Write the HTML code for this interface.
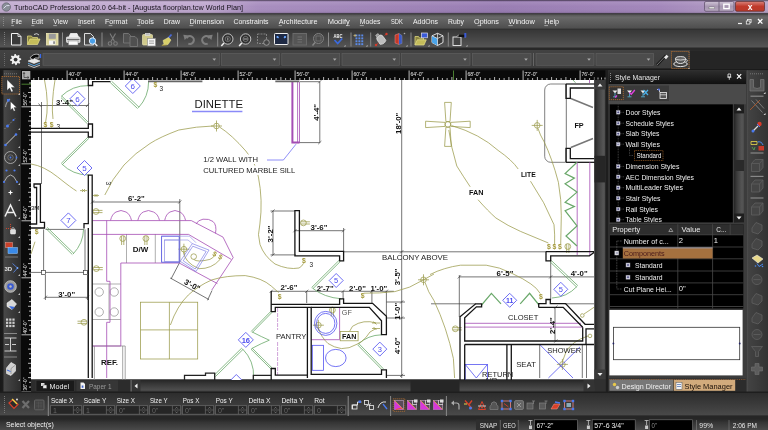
<!DOCTYPE html>
<html>
<head>
<meta charset="utf-8">
<title>TurboCAD Professional 20.0 64-bit - [Augusta floorplan.tcw World Plan]</title>
<style>
html,body{margin:0;padding:0;background:#2b2b2b;}
body{width:768px;height:430px;overflow:hidden;position:relative;font-family:"Liberation Sans","DejaVu Sans",sans-serif;}
.abs{position:absolute;display:block;}
svg text{white-space:pre;}
svg{filter:blur(0.35px);}
</style>
</head>
<body>
<svg class="abs" style="left:0;top:0" width="768" height="430" viewBox="0 0 768 430" font-family="Liberation Sans, sans-serif">
<defs>
<linearGradient id="gTitle" x1="0" x2="1" y1="0" y2="0"><stop offset="0" stop-color="#c2acd0"/><stop offset="0.27" stop-color="#bfa8cf"/><stop offset="0.335" stop-color="#a88ebf"/><stop offset="0.65" stop-color="#997db3"/><stop offset="0.86" stop-color="#a387bb"/><stop offset="1" stop-color="#b7a4c6"/></linearGradient>
<linearGradient id="gTitleV" x1="0" x2="0" y1="0" y2="1"><stop offset="0" stop-color="#000" stop-opacity="0.6"/><stop offset="0.09" stop-color="#000" stop-opacity="0.1"/><stop offset="0.15" stop-color="#fff" stop-opacity="0.1"/><stop offset="0.5" stop-color="#fff" stop-opacity="0"/><stop offset="0.9" stop-color="#000" stop-opacity="0.05"/><stop offset="1" stop-color="#000" stop-opacity="0.3"/></linearGradient>
<linearGradient id="gMenu" x1="0" x2="0" y1="0" y2="1"><stop offset="0" stop-color="#333"/><stop offset="0.12" stop-color="#5a5a5a"/><stop offset="0.25" stop-color="#696969"/><stop offset="1" stop-color="#4c4c4c"/></linearGradient>
<linearGradient id="gTb1" x1="0" x2="0" y1="0" y2="1"><stop offset="0" stop-color="#363636"/><stop offset="0.5" stop-color="#464646"/><stop offset="1" stop-color="#565656"/></linearGradient>
<linearGradient id="gTb2" x1="0" x2="0" y1="0" y2="1"><stop offset="0" stop-color="#424242"/><stop offset="1" stop-color="#3c3c3c"/></linearGradient>
<linearGradient id="gSide" x1="0" x2="1" y1="0" y2="0"><stop offset="0" stop-color="#181818"/><stop offset="0.13" stop-color="#1c1c1c"/><stop offset="0.2" stop-color="#474747"/><stop offset="1" stop-color="#2c2c2c"/></linearGradient><linearGradient id="gSideR" x1="0" x2="1" y1="0" y2="0"><stop offset="0" stop-color="#444"/><stop offset="1" stop-color="#333"/></linearGradient>
<linearGradient id="gScrollV" x1="0" x2="1" y1="0" y2="0"><stop offset="0" stop-color="#242424"/><stop offset="0.3" stop-color="#3c3c3c"/><stop offset="0.8" stop-color="#565656"/><stop offset="1" stop-color="#4a4a4a"/></linearGradient>
<linearGradient id="gScrollH" x1="0" x2="0" y1="0" y2="1"><stop offset="0" stop-color="#262626"/><stop offset="0.3" stop-color="#363636"/><stop offset="0.8" stop-color="#4c4c4c"/><stop offset="1" stop-color="#3e3e3e"/></linearGradient>
<linearGradient id="gSmTitle" x1="0" x2="0" y1="0" y2="1"><stop offset="0" stop-color="#2e2e2e"/><stop offset="1" stop-color="#101010"/></linearGradient>
<linearGradient id="gClose" x1="0" x2="0" y1="0" y2="1"><stop offset="0" stop-color="#d9827a"/><stop offset="0.5" stop-color="#c0392b"/><stop offset="1" stop-color="#b83a2a"/></linearGradient>
<linearGradient id="gBtn" x1="0" x2="0" y1="0" y2="1"><stop offset="0" stop-color="#cfc4d6"/><stop offset="0.5" stop-color="#a898b2"/><stop offset="1" stop-color="#b4a6bc"/></linearGradient>
</defs>
<rect x="0" y="0" width="768" height="430" fill="#2b2b2b"/>
<rect x="0" y="0" width="768" height="13.500" fill="url(#gTitle)"/><rect x="0" y="0" width="768" height="13.500" fill="url(#gTitleV)"/>
<circle cx="6.300" cy="7" r="4.200" fill="#8a8f98" stroke="#5a5a66" stroke-width="0.6"/><path d="M3.500 8.500q2.500-4 6-3" fill="none" stroke="#dde" stroke-width="1"/>
<text x="14" y="10" font-size="7.600px" fill="#15121a" textLength="229" lengthAdjust="spacingAndGlyphs">TurboCAD Professional 20.0 64-bit - [Augusta floorplan.tcw World Plan]</text>
<rect x="704.500" y="1.500" width="29.500" height="9.800" rx="1.500" fill="url(#gBtn)" stroke="#5a4a66" stroke-width="0.7"/><path d="M719 1.500V11.300" stroke="#5a4a66" stroke-width="0.7"/>
<rect x="735.500" y="1.500" width="29" height="9.800" rx="1.500" fill="url(#gClose)" stroke="#5a2a2a" stroke-width="0.7"/>
<rect x="709" y="7" width="5.500" height="1.800" fill="#fff" stroke="#555" stroke-width="0.4"/><rect x="723.800" y="4.200" width="5.400" height="4.400" fill="none" stroke="#fff" stroke-width="1.300"/>
<text x="750" y="9.800" font-size="8.500px" font-weight="bold" fill="#fff" text-anchor="middle">x</text>
<rect x="0" y="13.400" width="768" height="15.800" fill="url(#gMenu)"/><rect x="0" y="28.700" width="768" height="0.900" fill="#2a2a2a"/>
<path d="M3.500 17v10" stroke="#888" stroke-width="1" stroke-dasharray="1 1"/>
<text x="11.3" y="24.300" font-size="7.600px" fill="#f2f2f2" textLength="10.8" lengthAdjust="spacingAndGlyphs">File</text>
<path d="M11.3 25.600h2.7" stroke="#ddd" stroke-width="0.6"/>
<text x="31.4" y="24.300" font-size="7.600px" fill="#f2f2f2" textLength="11.8" lengthAdjust="spacingAndGlyphs">Edit</text>
<path d="M31.4 25.600h3.0" stroke="#ddd" stroke-width="0.6"/>
<text x="53.3" y="24.300" font-size="7.600px" fill="#f2f2f2" textLength="14.5" lengthAdjust="spacingAndGlyphs">View</text>
<path d="M53.3 25.600h3.6" stroke="#ddd" stroke-width="0.6"/>
<text x="77.9" y="24.300" font-size="7.600px" fill="#f2f2f2" textLength="17.1" lengthAdjust="spacingAndGlyphs">Insert</text>
<path d="M77.9 25.600h2.8" stroke="#ddd" stroke-width="0.6"/>
<text x="105" y="24.300" font-size="7.600px" fill="#f2f2f2" textLength="22.4" lengthAdjust="spacingAndGlyphs">Format</text>
<path d="M108.7 25.600h3.7" stroke="#ddd" stroke-width="0.6"/>
<text x="137" y="24.300" font-size="7.600px" fill="#f2f2f2" textLength="16.8" lengthAdjust="spacingAndGlyphs">Tools</text>
<path d="M137.0 25.600h3.4" stroke="#ddd" stroke-width="0.6"/>
<text x="163.8" y="24.300" font-size="7.600px" fill="#f2f2f2" textLength="16.2" lengthAdjust="spacingAndGlyphs">Draw</text>
<text x="189.5" y="24.300" font-size="7.600px" fill="#f2f2f2" textLength="34.5" lengthAdjust="spacingAndGlyphs">Dimension</text>
<path d="M189.5 25.600h3.8" stroke="#ddd" stroke-width="0.6"/>
<text x="233.5" y="24.300" font-size="7.600px" fill="#f2f2f2" textLength="35.1" lengthAdjust="spacingAndGlyphs">Constraints</text>
<text x="278.7" y="24.300" font-size="7.600px" fill="#f2f2f2" textLength="38.9" lengthAdjust="spacingAndGlyphs">Architecture</text>
<path d="M278.7 25.600h3.2" stroke="#ddd" stroke-width="0.6"/>
<text x="327.7" y="24.300" font-size="7.600px" fill="#f2f2f2" textLength="22.1" lengthAdjust="spacingAndGlyphs">Modify</text>
<path d="M346.1 25.600h3.7" stroke="#ddd" stroke-width="0.6"/>
<text x="359.8" y="24.300" font-size="7.600px" fill="#f2f2f2" textLength="20.6" lengthAdjust="spacingAndGlyphs">Modes</text>
<path d="M359.8 25.600h4.1" stroke="#ddd" stroke-width="0.6"/>
<text x="391" y="24.300" font-size="7.600px" fill="#f2f2f2" textLength="11.8" lengthAdjust="spacingAndGlyphs">SDK</text>
<text x="412.9" y="24.300" font-size="7.600px" fill="#f2f2f2" textLength="25.1" lengthAdjust="spacingAndGlyphs">AddOns</text>
<text x="448" y="24.300" font-size="7.600px" fill="#f2f2f2" textLength="15.9" lengthAdjust="spacingAndGlyphs">Ruby</text>
<text x="474" y="24.300" font-size="7.600px" fill="#f2f2f2" textLength="25.0" lengthAdjust="spacingAndGlyphs">Options</text>
<path d="M477.6 25.600h3.6" stroke="#ddd" stroke-width="0.6"/>
<text x="508.4" y="24.300" font-size="7.600px" fill="#f2f2f2" textLength="26.4" lengthAdjust="spacingAndGlyphs">Window</text>
<path d="M508.4 25.600h4.4" stroke="#ddd" stroke-width="0.6"/>
<text x="544.3" y="24.300" font-size="7.600px" fill="#f2f2f2" textLength="14.8" lengthAdjust="spacingAndGlyphs">Help</text>
<path d="M544.3 25.600h3.7" stroke="#ddd" stroke-width="0.6"/>
<path d="M738 23.500h4" stroke="#eee" stroke-width="1.200"/><rect x="747.500" y="19.500" width="3.600" height="3" fill="none" stroke="#eee" stroke-width="0.8"/><rect x="746.300" y="21" width="3.600" height="3" fill="#4a4a4a" stroke="#eee" stroke-width="0.8"/><path d="M758 19l4.400 4.600M762.400 19l-4.400 4.600" stroke="#fff" stroke-width="1.300"/>
<rect x="0" y="29.500" width="768" height="18.300" fill="url(#gTb1)"/><rect x="0" y="47.600" width="768" height="2.500" fill="#282828"/>
<path d="M4.500 32v14" stroke="#7a7a7a" stroke-width="1" stroke-dasharray="1 1"/>
<rect x="0" y="50" width="768" height="18.600" fill="url(#gTb2)"/><rect x="0" y="68.500" width="768" height="1.700" fill="#1a1a1a"/>
<path d="M4.500 53v13" stroke="#6a6a6a" stroke-width="1" stroke-dasharray="1 1"/>
<rect x="43" y="53.500" width="176.3" height="11.800" fill="#4c4c4c" stroke="#5e5e5e" stroke-width="0.7"/>
<path d="M212.5 58.600h3.600l-1.800 2.100z" fill="#aaa"/>
<rect x="221.6" y="53.500" width="57.9" height="11.800" fill="#4c4c4c" stroke="#5e5e5e" stroke-width="0.7"/>
<path d="M272.7 58.600h3.600l-1.800 2.100z" fill="#aaa"/>
<rect x="281.8" y="53.500" width="57.9" height="11.800" fill="#4c4c4c" stroke="#5e5e5e" stroke-width="0.7"/>
<path d="M332.9 58.600h3.600l-1.800 2.100z" fill="#aaa"/>
<rect x="342" y="53.500" width="57.3" height="11.800" fill="#4c4c4c" stroke="#5e5e5e" stroke-width="0.7"/>
<path d="M392.5 58.600h3.600l-1.800 2.100z" fill="#aaa"/>
<rect x="401.6" y="53.500" width="68.4" height="11.800" fill="#4c4c4c" stroke="#5e5e5e" stroke-width="0.7"/>
<path d="M463.2 58.600h3.600l-1.800 2.100z" fill="#aaa"/>
<rect x="472.5" y="53.500" width="58.5" height="11.800" fill="#4c4c4c" stroke="#5e5e5e" stroke-width="0.7"/>
<path d="M524.2 58.600h3.600l-1.800 2.100z" fill="#aaa"/>
<rect x="536" y="53.500" width="58.0" height="11.800" fill="#4c4c4c" stroke="#5e5e5e" stroke-width="0.7"/>
<path d="M587.2 58.600h3.600l-1.800 2.100z" fill="#aaa"/>
<rect x="596" y="53.500" width="57.5" height="11.800" fill="#4c4c4c" stroke="#5e5e5e" stroke-width="0.7"/>
<path d="M646.7 58.600h3.600l-1.800 2.100z" fill="#aaa"/>
<path d="M533.500 53v13" stroke="#666" stroke-width="1"/>
<rect x="690" y="50.200" width="78" height="19" fill="#252525"/>
<path d="M11.500 33.500h6.500l3 3v8.500h-9.500z" fill="#3a3a3a" stroke="#f2f2f2" stroke-width="1"/><path d="M18 33.500v3h3" fill="none" stroke="#f2f2f2" stroke-width="0.8"/>
<path d="M27.500 44.500v-8.500h4l1 1.500h5v2" fill="#8a8440" stroke="#d8d27a" stroke-width="0.8"/><path d="M27.500 44.500l2.500-5.500h10l-2.500 5.500z" fill="#c4bc5a" stroke="#e6e08c" stroke-width="0.7"/><path d="M34 34.500q3-2 5 0.500" fill="none" stroke="#ddd" stroke-width="0.9"/>
<rect x="46.500" y="33.500" width="11.500" height="11.500" fill="#d9d39a" stroke="#efe9b8" stroke-width="0.8"/><rect x="48.800" y="33.800" width="7" height="5" fill="#9a9a9a"/><rect x="49" y="40.500" width="6.500" height="4.200" fill="#f4f4f4"/><rect x="53.300" y="41.300" width="1.500" height="2.600" fill="#777"/>
<path d="M62.5 32.5V46.5" stroke="#8a8a8a" stroke-width="1"/>
<path d="M69 37l1.500-3.500h6.500l1.500 3.500" fill="#eee" stroke="#fff" stroke-width="0.7"/><rect x="66.500" y="37" width="13.500" height="5.500" rx="0.800" fill="#cfcfcf" stroke="#f4f4f4" stroke-width="0.7"/><rect x="68.500" y="41" width="9.500" height="4" fill="#fafafa" stroke="#888" stroke-width="0.5"/><path d="M67 39.500h12.500" stroke="#555" stroke-width="0.8"/>
<path d="M84.500 33.500h6l3 3v8.500h-9z" fill="#4a4a4a" stroke="#eee" stroke-width="0.9"/><circle cx="92.500" cy="41" r="3.200" fill="#4aa0e8" stroke="#dfe8f4" stroke-width="1"/><path d="M94.800 43.500l2.500 2.500" stroke="#eee" stroke-width="1.400"/>
<path d="M102 32.5V46.5" stroke="#8a8a8a" stroke-width="1"/>
<g stroke="#7c7c7c" fill="none" stroke-width="1.100"><path d="M110 33.500l4.500 8M115.500 33.500l-4.500 8"/><circle cx="110" cy="43.500" r="1.800"/><circle cx="115.500" cy="43.500" r="1.800"/></g>
<g stroke="#777" fill="#505050" stroke-width="0.9"><path d="M123.500 33.500h5l2 2v7.500h-7z"/><path d="M130 36.500h5l2.500 2.500v7.500h-7.500z"/></g>
<rect x="142.500" y="34.500" width="10" height="10.500" rx="1" fill="#cfc98c" stroke="#e8e2b0" stroke-width="0.7"/><rect x="145.500" y="33.300" width="4.500" height="2.400" fill="#bbb" stroke="#eee" stroke-width="0.5"/><rect x="147.500" y="38.500" width="8" height="7.500" fill="#f6f6f6" stroke="#888" stroke-width="0.6"/><path d="M149 41h5M149 43.200h5" stroke="#777" stroke-width="0.7"/>
<path d="M171.500 34.500l-4 4.500" stroke="#4a6ad8" stroke-width="1.800"/><path d="M168.500 37.500l-5.500 3l1 3.500l-2 1.500l6-1l3-4.500z" fill="#d8cf6a" stroke="#efe79a" stroke-width="0.5"/><path d="M161.500 45.300h5" stroke="#8a7a30" stroke-width="0.9"/>
<path d="M177.5 32.5V46.5" stroke="#8a8a8a" stroke-width="1"/>
<g stroke="#7e7e7e" fill="none" stroke-width="2.100"><path d="M186.500 38.200A3.900 3.900 0 1 1 188.300 43.600"/><path d="M209.500 38.200A3.900 3.900 0 1 0 207.700 43.600"/></g><path d="M183.300 34.800l5.600 0.600l-4.200 4.600z" fill="#7e7e7e"/><path d="M212.700 34.800l-5.600 0.600l4.200 4.600z" fill="#7e7e7e"/>
<path d="M217.7 32.5V46.5" stroke="#8a8a8a" stroke-width="1"/>
<circle cx="227.8" cy="39" r="5.200" fill="#303030" stroke="#d0d0d0" stroke-width="0.900"/><circle cx="227.8" cy="39" r="2.600" fill="none" stroke="#999" stroke-width="0.6"/><path d="M224.0 43l-2.700 3" stroke="#f0f0f0" stroke-width="1.500"/>
<path d="M227.8 37.500v3" stroke="#ccc" stroke-width="0.8"/>
<circle cx="245.6" cy="39" r="5.200" fill="#303030" stroke="#d0d0d0" stroke-width="0.900"/><circle cx="245.6" cy="39" r="2.600" fill="none" stroke="#999" stroke-width="0.6"/><path d="M241.79999999999998 43l-2.700 3" stroke="#f0f0f0" stroke-width="1.500"/>
<path d="M243.6 39h4" stroke="#ccc" stroke-width="0.8"/>
<rect x="257.500" y="34" width="9" height="9.500" fill="none" stroke="#8a8a8a" stroke-width="0.9" stroke-dasharray="2 1"/><circle cx="266.500" cy="42.500" r="2.800" fill="#444" stroke="#aaa" stroke-width="0.8"/>
<rect x="274.500" y="33.500" width="13.500" height="11" rx="0.800" fill="#1f2a44" stroke="#f0f0f0" stroke-width="1"/><path d="M277 36.500l1.500 1.500M285.500 36.500l-1.500 1.500" stroke="#6aa8ff" stroke-width="1.200"/><circle cx="277.500" cy="37" r="1" fill="#6aa8ff"/><circle cx="285" cy="37" r="1" fill="#6aa8ff"/>
<rect x="293" y="33.500" width="13.500" height="11.500" fill="#555" stroke="#6e6e6e" stroke-width="0.9"/><path d="M297.500 37h4.500M297.500 39.500h4.500M297.500 42h4.500" stroke="#777" stroke-width="0.8"/>
<circle cx="318.500" cy="38.500" r="5" fill="#4a4a4a" stroke="#808080" stroke-width="1"/><rect x="316" y="36" width="5" height="5" fill="none" stroke="#7a7a7a" stroke-width="0.7"/><path d="M315 42.500l-2.500 3" stroke="#888" stroke-width="1.400"/>
<path d="M328.5 32.5V46.5" stroke="#8a8a8a" stroke-width="1"/>
<text x="333.500" y="37.500" font-size="4.500px" font-weight="bold" fill="#f0f0f0" textLength="9" lengthAdjust="spacingAndGlyphs">ABC</text><path d="M334.500 40l3.200 3.500l4.500-5" fill="none" stroke="#3a6ae0" stroke-width="1.700"/><path d="M344 46.500h1.500v-1.500z" fill="#ddd"/>
<path d="M351 32.5V46.5" stroke="#8a8a8a" stroke-width="1"/>
<g fill="#5a8ae8"><rect x="355.5" y="34.5" width="1.900" height="1.900"/><rect x="355.5" y="37.4" width="1.900" height="1.900"/><rect x="355.5" y="40.3" width="1.900" height="1.900"/><rect x="355.5" y="43.2" width="1.900" height="1.900"/><rect x="358.4" y="34.5" width="1.900" height="1.900"/><rect x="358.4" y="37.4" width="1.900" height="1.900"/><rect x="358.4" y="40.3" width="1.900" height="1.900"/><rect x="358.4" y="43.2" width="1.900" height="1.900"/><rect x="361.3" y="34.5" width="1.900" height="1.900"/><rect x="361.3" y="37.4" width="1.900" height="1.900"/><rect x="361.3" y="40.3" width="1.900" height="1.900"/><rect x="361.3" y="43.2" width="1.900" height="1.900"/></g><path d="M353.500 35.500h3M355 34v3" stroke="#e8d080" stroke-width="0.6"/><path d="M366 46.500h1.500v-1.500z" fill="#ddd"/>
<path d="M370.7 32.5V46.5" stroke="#8a8a8a" stroke-width="1"/>
<g transform="rotate(-35 381 39.500)"><path d="M377.500 38q0-3 3.500-3t3.500 3v5q-3.500 2.500-7 0z" fill="#bdbdbd" stroke="#eee" stroke-width="0.6"/><path d="M379 35v-2h3v2" fill="#999" stroke="#ddd" stroke-width="0.5"/></g><circle cx="386.500" cy="34" r="1.200" fill="#d83a2a"/><circle cx="376" cy="45" r="1.200" fill="#d83a2a"/><path d="M384.500 35.500l2-1.500M376.500 44.500l2-1.500" stroke="#d83a2a" stroke-width="0.7"/>
<path d="M395 35l4-1.500v11l-4-1.500z" fill="#c23a2a" stroke="#e88" stroke-width="0.5"/><path d="M399 33.500l3 2v8l-3 1" fill="#3a5ac8" stroke="#88a" stroke-width="0.5"/><circle cx="404.500" cy="33.500" r="0.800" fill="#aaa"/><path d="M406 46.500h1.500v-1.500z" fill="#ddd"/>
<path d="M411 32.5V46.5" stroke="#8a8a8a" stroke-width="1"/>
<path d="M415 45v-8.500h3.500l1 1.500h4v2" fill="#8a8440" stroke="#d8d27a" stroke-width="0.8"/><path d="M415 45l2.300-5.200h9l-2.300 5.200z" fill="#c4bc5a" stroke="#e6e08c" stroke-width="0.7"/><rect x="421.500" y="33" width="6" height="4.800" fill="#3a5ad8" stroke="#dde" stroke-width="0.7"/><path d="M428 46.500h1.500v-1.500z" fill="#ddd"/>
<path d="M437.500 33.300l5.500 2.500v6.700l-5.500 3l-5.500-3v-6.700z" fill="#3a3a3a" stroke="#f2f2f2" stroke-width="0.9"/><path d="M432 35.800l5.500 2.700v7l-5.500-3z" fill="#4aa4ea"/><path d="M432 35.800l5.500 2.700l5.500-2.700M437.500 38.500v7M437.500 33.300v5" fill="none" stroke="#f2f2f2" stroke-width="0.7"/>
<path d="M448.3 32.5V46.5" stroke="#8a8a8a" stroke-width="1"/>
<rect x="453" y="37" width="8" height="8.500" fill="#444" stroke="#eee" stroke-width="0.9"/><path d="M457 36.500l2-2h6v3" fill="#111" stroke="#eee" stroke-width="0.7"/><rect x="459" y="34.200" width="6" height="2.800" fill="#111"/><rect x="464.300" y="33" width="2" height="4.500" fill="#3a5ad8"/><path d="M466 46.500h1.500v-1.500z" fill="#ddd"/>
<polygon points="21.09,58.51 21.20,59.73 19.62,60.40 19.35,61.26 20.26,62.71 19.47,63.65 17.88,63.01 17.08,63.42 16.69,65.09 15.47,65.20 14.80,63.62 13.94,63.35 12.49,64.26 11.55,63.47 12.19,61.88 11.78,61.08 10.11,60.69 10.00,59.47 11.58,58.80 11.85,57.94 10.94,56.49 11.73,55.55 13.32,56.19 14.12,55.78 14.51,54.11 15.73,54.00 16.40,55.58 17.26,55.85 18.71,54.94 19.65,55.73 19.01,57.32 19.42,58.12" fill="#f0f0f0"/><circle cx="15.600" cy="59.600" r="1.900" fill="#333"/>
<path d="M28 61l6-2.500l6 2.500l-6 2.500z" fill="#e8e8e8" stroke="#fff" stroke-width="0.5"/><path d="M28 63.200l6 2.500l6-2.500" fill="none" stroke="#5aa0d8" stroke-width="1"/><path d="M28 65.200l6 2.300l6-2.300" fill="none" stroke="#ddd" stroke-width="0.8"/><path d="M30 58q3-5 9-3.500v3.500q-4-1-6 1.500z" fill="#0a0a0a" stroke="#ddd" stroke-width="0.7"/><path d="M40.500 54v4" stroke="#3a6ae8" stroke-width="1.200"/>
<path d="M657 65l9-9.500" stroke="#1a1a1a" stroke-width="2.600"/><path d="M657 65l9-9.500" stroke="#888" stroke-width="0.8"/><path d="M664 57.500l2.500-2.700l2 1.800l-2.500 2.700z" fill="#e8e8e8"/>
<rect x="671.500" y="51.500" width="17.500" height="17" fill="#3a3a3a" stroke="#c87830" stroke-width="0.7" stroke-dasharray="1.200 0.800"/><ellipse cx="680.500" cy="64" rx="6.800" ry="2.600" fill="#444" stroke="#f0f0f0" stroke-width="0.9"/><path d="M675.500 58.500q0 5 5 5t5-5z" fill="#555" stroke="#f4f4f4" stroke-width="0.9"/><ellipse cx="680.500" cy="58.300" rx="5" ry="1.800" fill="#666" stroke="#f4f4f4" stroke-width="0.8"/><path d="M685.500 59.500q3 0 1 2.500" fill="none" stroke="#eee" stroke-width="0.8"/><path d="M688 69h1.500v-1.500z" fill="#ddd"/>
<rect x="0" y="70.200" width="21" height="322" fill="url(#gSide)"/>
<path d="M4 73.800h13" stroke="#777" stroke-width="1" stroke-dasharray="1 1"/>
<rect x="1.800" y="76.500" width="17.700" height="17.500" fill="#3a3a3a" stroke="#c87830" stroke-width="0.7" stroke-dasharray="1.200 0.800"/>
<path d="M7 79.500v11l2.600-2.400l1.800 4l1.800-0.800l-1.800-3.900h3.600z" fill="#fff" stroke="#222" stroke-width="0.4"/>
<path d="M20 95h-2l2-2z" fill="#bbb"/>
<path d="M5.500 107q0.500-5 4.500-8" fill="none" stroke="#999" stroke-width="1.100"/><rect x="7" y="99" width="2.600" height="2.600" fill="#4a7af0"/><path d="M10.500 101.500v8.500l2-1.800l1.400 3l1.400-0.600l-1.400-3h2.800z" fill="#fff" stroke="#222" stroke-width="0.3"/>
<path d="M4.500 129l11-11" stroke="#888" stroke-width="0.9" stroke-dasharray="1.500 1.200"/><circle cx="7.500" cy="126" r="1.500" fill="#4a7af0"/><circle cx="13.500" cy="120" r="1" fill="#4a7af0"/>
<path d="M20 130h-2l2-2z" fill="#bbb"/>
<path d="M5.500 145l10.500-10.500" stroke="#ccc" stroke-width="1"/><circle cx="5.500" cy="145" r="1.300" fill="#4a7af0"/><circle cx="16" cy="134.500" r="1.300" fill="#4a7af0"/>
<path d="M20 148h-2l2-2z" fill="#bbb"/>
<circle cx="10.500" cy="157.500" r="6" fill="none" stroke="#bbb" stroke-width="0.8"/><circle cx="10.500" cy="157.500" r="2.700" fill="none" stroke="#888" stroke-width="0.6"/><circle cx="10.500" cy="157.500" r="0.900" fill="#4a7af0"/><circle cx="16.500" cy="157.500" r="0.900" fill="#4a7af0"/>
<path d="M20 166h-2l2-2z" fill="#bbb"/>
<path d="M4 182q6.500-14 13 0" fill="none" stroke="#bbb" stroke-width="0.9"/><circle cx="6.500" cy="170.500" r="1.100" fill="#4a7af0"/><circle cx="14.500" cy="170.500" r="1.100" fill="#4a7af0"/><circle cx="4" cy="182" r="1.100" fill="#4a7af0"/><circle cx="17" cy="182" r="1.100" fill="#4a7af0"/>
<path d="M20 185h-2l2-2z" fill="#bbb"/>
<path d="M10.500 190.500v4M8.500 192.500h4" stroke="#fff" stroke-width="1.200"/>
<path d="M20 201h-2l2-2z" fill="#bbb"/>
<path d="M5 216.500l5.500-11.500l5.500 11.500M7.500 212.500h6" fill="none" stroke="#eee" stroke-width="1.500"/>
<path d="M20 219h-2l2-2z" fill="#bbb"/>
<path d="M6 228.500h5M10.500 224v5" stroke="#d8452a" stroke-width="0.9" stroke-dasharray="1 1"/><rect x="10.500" y="229.500" width="5" height="4.500" rx="0.800" fill="#ddd" stroke="#fff" stroke-width="0.5"/><path d="M11.800 229.500v-1.200q1.200-1.500 2.400 0v1.200" fill="none" stroke="#ddd" stroke-width="0.7"/>
<path d="M20 238h-2l2-2z" fill="#bbb"/>
<rect x="5.500" y="242.500" width="7" height="5" fill="#c8402a" stroke="#f0a090" stroke-width="0.5"/><rect x="8" y="247.500" width="9.500" height="6" fill="#3a8ae8" stroke="#9cf" stroke-width="0.5"/><path d="M5 257h13" stroke="#777" stroke-width="1"/>
<text x="4.500" y="271" font-size="6px" font-weight="bold" fill="#e0e0e0">3D</text><path d="M12.500 263.500l5 4.500l-4 4.500" fill="none" stroke="#5a8af0" stroke-width="0.8"/><circle cx="17.500" cy="268" r="0.900" fill="#7af"/>
<path d="M20 276h-2l2-2z" fill="#bbb"/>
<circle cx="10.500" cy="286.500" r="5.800" fill="#9a9a9a" stroke="#ddd" stroke-width="0.7"/><circle cx="10.500" cy="286.500" r="3.300" fill="#3a5ad0"/><circle cx="10.500" cy="286.500" r="1.200" fill="#bbb"/>
<path d="M20 295h-2l2-2z" fill="#bbb"/>
<path d="M7 303l5-3.500l4.500 4.500l-4.500 5.500l-5-3z" fill="#d8d8d8" stroke="#fff" stroke-width="0.5"/><path d="M9 306l3 3.500l3-2.500" fill="#3a6ae0"/>
<path d="M20 313h-2l2-2z" fill="#bbb"/>
<g fill="#ccc"><rect x="6.0" y="318.5" width="2.200" height="2.200"/><rect x="6.0" y="321.7" width="2.200" height="2.200"/><rect x="6.0" y="324.9" width="2.200" height="2.200"/><rect x="9.2" y="318.5" width="2.200" height="2.200"/><rect x="9.2" y="321.7" width="2.200" height="2.200"/><rect x="9.2" y="324.9" width="2.200" height="2.200"/><rect x="12.4" y="318.5" width="2.200" height="2.200"/><rect x="12.4" y="321.7" width="2.200" height="2.200"/><rect x="12.4" y="324.9" width="2.200" height="2.200"/></g>
<path d="M4 333.500h13" stroke="#888" stroke-width="1"/>
<path d="M4.500 338h12M4.500 351h12M10.500 338v13" stroke="#ddd" stroke-width="0.9"/><path d="M5 344.500h4M12 344.500h4" stroke="#ddd" stroke-width="0.9"/><path d="M4 357h13" stroke="#888" stroke-width="1"/>
<path d="M6.500 368l4.500-5.500l4.500 2.500v6l-4.500 4.500l-4.500-2z" fill="#d0d0d0" stroke="#f4f4f4" stroke-width="0.6"/><path d="M11 374v-5.500l4.500-3.500" fill="none" stroke="#777" stroke-width="0.6"/><path d="M7 370l3.500 1.500" stroke="#3a6ae0" stroke-width="1"/>
<path d="M20 381h-2l2-2z" fill="#bbb"/>
<rect x="21" y="70.200" width="575" height="9.800" fill="#0a0a0a"/><rect x="21" y="80" width="10" height="312" fill="#0a0a0a"/>
<rect x="22" y="71" width="8.300" height="8.300" fill="#b0b0b0"/><path d="M24 72.500v5h4.500M23 74l1-1.500l1 1.500M27.500 76.500l1.500 1l-1.500 1" fill="none" stroke="#222" stroke-width="0.6"/>
<path d="M33.8 80v-2M38.6 80v-3M43.3 80v-2M48.1 80v-2M52.8 80v-3M57.6 80v-2M62.3 80v-2M71.8 80v-2M76.6 80v-2M81.3 80v-3M86.1 80v-2M90.8 80v-2M95.6 80v-3M100.3 80v-2M105.1 80v-2M109.8 80v-3M114.6 80v-2M119.3 80v-2M128.8 80v-2M133.6 80v-2M138.3 80v-3M143.1 80v-2M147.8 80v-2M152.6 80v-3M157.3 80v-2M162.1 80v-2M166.8 80v-3M171.6 80v-2M176.3 80v-2M185.8 80v-2M190.6 80v-2M195.3 80v-3M200.1 80v-2M204.8 80v-2M209.6 80v-3M214.3 80v-2M219.1 80v-2M223.8 80v-3M228.6 80v-2M233.3 80v-2M242.8 80v-2M247.6 80v-2M252.3 80v-3M257.1 80v-2M261.9 80v-2M266.6 80v-3M271.4 80v-2M276.1 80v-2M280.9 80v-3M285.6 80v-2M290.4 80v-2M299.9 80v-2M304.6 80v-2M309.4 80v-3M314.1 80v-2M318.9 80v-2M323.6 80v-3M328.4 80v-2M333.1 80v-2M337.9 80v-3M342.6 80v-2M347.4 80v-2M356.9 80v-2M361.6 80v-2M366.4 80v-3M371.1 80v-2M375.9 80v-2M380.6 80v-3M385.4 80v-2M390.1 80v-2M394.9 80v-3M399.6 80v-2M404.4 80v-2M413.9 80v-2M418.6 80v-2M423.4 80v-3M428.1 80v-2M432.9 80v-2M437.6 80v-3M442.4 80v-2M447.1 80v-2M451.9 80v-3M456.6 80v-2M461.4 80v-2M470.9 80v-2M475.6 80v-2M480.4 80v-3M485.1 80v-2M489.9 80v-2M494.6 80v-3M499.4 80v-2M504.1 80v-2M508.9 80v-3M513.6 80v-2M518.4 80v-2M527.9 80v-2M532.6 80v-2M537.4 80v-3M542.1 80v-2M546.9 80v-2M551.6 80v-3M556.4 80v-2M561.1 80v-2M565.9 80v-3M570.6 80v-2M575.4 80v-2M584.9 80v-2M589.6 80v-2M594.4 80v-3" stroke="#e0e0e0" stroke-width="0.8"/>
<text x="68.4" y="76.200" font-size="5.200px" fill="#e8e8e8" textLength="13" lengthAdjust="spacingAndGlyphs">40'-0"</text>
<text x="125.4" y="76.200" font-size="5.200px" fill="#e8e8e8" textLength="13" lengthAdjust="spacingAndGlyphs">44'-0"</text>
<text x="182.4" y="76.200" font-size="5.200px" fill="#e8e8e8" textLength="13" lengthAdjust="spacingAndGlyphs">48'-0"</text>
<text x="239.4" y="76.200" font-size="5.200px" fill="#e8e8e8" textLength="13" lengthAdjust="spacingAndGlyphs">52'-0"</text>
<text x="296.4" y="76.200" font-size="5.200px" fill="#e8e8e8" textLength="13" lengthAdjust="spacingAndGlyphs">56'-0"</text>
<text x="353.4" y="76.200" font-size="5.200px" fill="#e8e8e8" textLength="13" lengthAdjust="spacingAndGlyphs">60'-0"</text>
<text x="410.4" y="76.200" font-size="5.200px" fill="#e8e8e8" textLength="13" lengthAdjust="spacingAndGlyphs">64'-0"</text>
<text x="467.4" y="76.200" font-size="5.200px" fill="#e8e8e8" textLength="13" lengthAdjust="spacingAndGlyphs">68'-0"</text>
<text x="524.4" y="76.200" font-size="5.200px" fill="#e8e8e8" textLength="13" lengthAdjust="spacingAndGlyphs">72'-0"</text>
<text x="581.4" y="76.200" font-size="5.200px" fill="#e8e8e8" textLength="13" lengthAdjust="spacingAndGlyphs">76'-0"</text>
<path d="M67.1 70.500v9.500M124.1 70.500v9.500M181.1 70.500v9.500M238.1 70.500v9.500M295.1 70.500v9.500M352.1 70.500v9.500M409.1 70.500v9.500M466.1 70.500v9.500M523.1 70.500v9.500M580.1 70.500v9.500" stroke="#e8e8e8" stroke-width="0.8"/>
<path d="M453.500 70.500v9.500" stroke="#5a9a3a" stroke-width="0.8"/>
<path d="M31 83.0h-2M31 87.8h-2M31 92.5h-3M31 97.3h-2M31 102.0h-2M31 111.5h-2M31 116.3h-2M31 121.0h-3M31 125.8h-2M31 130.6h-2M31 135.3h-3M31 140.1h-2M31 144.8h-2M31 149.6h-3M31 154.3h-2M31 159.1h-2M31 168.6h-2M31 173.3h-2M31 178.1h-3M31 182.8h-2M31 187.6h-2M31 192.3h-3M31 197.1h-2M31 201.8h-2M31 206.6h-3M31 211.3h-2M31 216.1h-2M31 225.6h-2M31 230.3h-2M31 235.1h-3M31 239.8h-2M31 244.6h-2M31 249.3h-3M31 254.1h-2M31 258.8h-2M31 263.6h-3M31 268.3h-2M31 273.1h-2M31 282.6h-2M31 287.3h-2M31 292.1h-3M31 296.8h-2M31 301.6h-2M31 306.3h-3M31 311.1h-2M31 315.8h-2M31 320.6h-3M31 325.3h-2M31 330.1h-2M31 339.6h-2M31 344.3h-2M31 349.1h-3M31 353.8h-2M31 358.6h-2M31 363.3h-3M31 368.1h-2M31 372.8h-2M31 377.6h-3M31 382.3h-2M31 387.1h-2" stroke="#e0e0e0" stroke-width="0.8"/>
<text transform="translate(27.300 105.5) rotate(-90)" font-size="5.200px" fill="#e8e8e8" textLength="13" lengthAdjust="spacingAndGlyphs">56'-0"</text>
<text transform="translate(27.300 162.5) rotate(-90)" font-size="5.200px" fill="#e8e8e8" textLength="13" lengthAdjust="spacingAndGlyphs">52'-0"</text>
<text transform="translate(27.300 219.5) rotate(-90)" font-size="5.200px" fill="#e8e8e8" textLength="13" lengthAdjust="spacingAndGlyphs">48'-0"</text>
<text transform="translate(27.300 276.5) rotate(-90)" font-size="5.200px" fill="#e8e8e8" textLength="13" lengthAdjust="spacingAndGlyphs">44'-0"</text>
<text transform="translate(27.300 333.5) rotate(-90)" font-size="5.200px" fill="#e8e8e8" textLength="13" lengthAdjust="spacingAndGlyphs">40'-0"</text>
<text transform="translate(27.300 390.5) rotate(-90)" font-size="5.200px" fill="#e8e8e8" textLength="13" lengthAdjust="spacingAndGlyphs">36'-0"</text>
<path d="M21.500 106.8h9.500M21.500 163.8h9.500M21.500 220.8h9.500M21.500 277.8h9.500M21.500 334.8h9.500M21.500 391.8h9.500" stroke="#e8e8e8" stroke-width="0.8"/>
<path d="M21.500 84.200h9.500" stroke="#5a9a3a" stroke-width="0.8"/>
<rect x="31" y="80" width="563.500" height="299.500" fill="#fff"/>
<rect x="594.500" y="80" width="11" height="299.500" fill="url(#gScrollV)"/><rect x="605.500" y="70.200" width="3" height="322" fill="#1e1e1e"/>
<rect x="594.500" y="80" width="11" height="9.500" fill="#3a3a3a"/><path d="M597.500 86.500l2.500-3l2.500 3z" fill="#f0f0f0"/>
<rect x="594.500" y="369.500" width="11" height="10" fill="#3a3a3a"/><path d="M597.500 373l2.500 3l2.500-3z" fill="#f0f0f0"/>
<rect x="594.500" y="155.800" width="11" height="26.600" fill="#262626"/>
<rect x="594.500" y="70.200" width="11" height="9.800" fill="#0a0a0a"/><path d="M598 77.500v2M601.500 77.500v2M605 77.500v2" stroke="#ddd" stroke-width="0.8"/>
<rect x="31" y="379.500" width="574.500" height="12.500" fill="#2c2c2c"/>
<rect x="36" y="380.200" width="38.500" height="11.300" fill="#1a1a1a" stroke="#3c3c3c" stroke-width="0.6"/>
<rect x="41" y="383" width="3.500" height="3" fill="#ddd"/><rect x="43" y="385" width="3.800" height="3.300" fill="#eee" stroke="#444" stroke-width="0.4"/>
<text x="49.500" y="388.800" font-size="7.600px" fill="#f0f0f0" textLength="19.500" lengthAdjust="spacingAndGlyphs">Model</text>
<rect x="76.500" y="380.200" width="41.500" height="11.300" fill="#363636"/><rect x="130.800" y="380" width="1.200" height="12" fill="#c8c8c8"/><path d="M80.500 382.500h3l1.500 1.500v5h-4.500z" fill="#f4f4f4"/><rect x="81.700" y="385.500" width="1.700" height="2.300" fill="#46c"/>
<text x="89" y="388.800" font-size="7.600px" fill="#9a9a9a" textLength="22.500" lengthAdjust="spacingAndGlyphs">Paper 1</text>
<rect x="131.500" y="380" width="463" height="12" fill="url(#gScrollH)"/>
<rect x="131.500" y="380" width="9" height="12" fill="#343434"/><path d="M137.500 383.500l-3 2.500l3 2.500z" fill="#f0f0f0"/>
<rect x="583.500" y="380" width="11" height="12" fill="#343434"/><path d="M587.500 383.500l3 2.500l-3 2.500z" fill="#f0f0f0"/>
<rect x="410.500" y="380" width="49" height="12" fill="#262626"/>
<rect x="594.500" y="379.500" width="11" height="12.500" fill="#303030"/>
<rect x="608.500" y="70.200" width="138" height="322" fill="#3c3c3c"/>
<rect x="608.500" y="70.200" width="137.500" height="14" fill="url(#gSmTitle)"/>
<path d="M610.500 73v9" stroke="#888" stroke-width="1" stroke-dasharray="1 1"/>
<text x="615" y="80.300" font-size="8px" fill="#e4e4e4" textLength="45" lengthAdjust="spacingAndGlyphs">Style Manager</text>
<path d="M728 74h2.600v3h-2.600zM727.300 77.200h4M729.300 77.200v2.600" fill="none" stroke="#eee" stroke-width="0.8"/><path d="M737 74.200l4.200 4.400M741.200 74.200l-4.200 4.400" stroke="#fff" stroke-width="1.200"/>
<rect x="608.500" y="84.200" width="137.500" height="20" fill="#4a4a4a"/><rect x="608.500" y="85.500" width="60.500" height="15.500" fill="#3a3a3a"/>
<rect x="609.300" y="86.800" width="14" height="12.800" fill="#333" stroke="#c87830" stroke-width="0.7" stroke-dasharray="1.200 0.800"/>
<path d="M612.5 90.500h5l-2.500 2.800z" fill="#eee"/><path d="M615.0 93v3.500M613.0 96.800h4" stroke="#5ac" stroke-width="0.9"/><rect x="617.500" y="88.500" width="3.500" height="5.500" fill="#ddd"/><path d="M615 97.500l2-2" stroke="#e040e0" stroke-width="1.100"/>
<path d="M627 90.500h5l-2.500 2.800z" fill="#eee"/><path d="M629.5 93v3.500M627.5 96.800h4" stroke="#5ac" stroke-width="0.9"/><path d="M629.500 92.500l1.800 1.800l3.500-4.300" fill="none" stroke="#e040e0" stroke-width="1.400"/>
<path d="M640.5 90.500h5l-2.500 2.800z" fill="#eee"/><path d="M643.0 93v3.500M641.0 96.800h4" stroke="#5ac" stroke-width="0.9"/><path d="M643.500 90l4.500 5M648 90l-4.500 5" stroke="#4ab0e8" stroke-width="1.200"/>
<path d="M659.500 92v-2.500l-2.500 0" fill="none" stroke="#eee" stroke-width="0.8"/><circle cx="658.800" cy="89.500" r="1.100" fill="#4a6ae8"/><rect x="660" y="92.500" width="6.500" height="6" fill="#555" stroke="#eee" stroke-width="0.8"/><path d="M660 94.800h6.500" stroke="#eee" stroke-width="0.7"/>
<rect x="609.800" y="104.400" width="123" height="118" fill="#000"/>
<rect x="734" y="104.400" width="10" height="118" fill="url(#gScrollV)"/><rect x="734" y="104.400" width="10" height="9" fill="#1e1e1e"/><path d="M736.500 110.500l2.500-3l2.500 3z" fill="#f4f4f4"/><rect x="734" y="213.500" width="10" height="9" fill="#1e1e1e"/><path d="M736.500 216.500l2.500 3l2.500-3z" fill="#f4f4f4"/><rect x="734" y="160" width="10" height="11" fill="#2a2a2a"/>
<clipPath id="cpTree"><rect x="609.800" y="104.400" width="123" height="118"/></clipPath><g clip-path="url(#cpTree)">
<path d="M618.200 104.400V222" stroke="#777" stroke-width="0.6" stroke-dasharray="0.800 0.800"/>
<path d="M620 112.3h4" stroke="#777" stroke-width="0.6" stroke-dasharray="0.800 0.800"/>
<rect x="616.400" y="110.5" width="3.600" height="3.600" fill="#e8e8f4" stroke="#889" stroke-width="0.5"/><path d="M617.200 112.3h2" stroke="#226" stroke-width="0.7"/><path d="M618.200 111.3v2" stroke="#226" stroke-width="0.7"/>
<text x="625.500" y="115.0" font-size="7.600px" fill="#f0f0f0" textLength="35" lengthAdjust="spacingAndGlyphs">Door Styles</text>
<path d="M620 123.2h4" stroke="#777" stroke-width="0.6" stroke-dasharray="0.800 0.800"/>
<rect x="616.400" y="121.4" width="3.600" height="3.600" fill="#e8e8f4" stroke="#889" stroke-width="0.5"/><path d="M617.200 123.2h2" stroke="#226" stroke-width="0.7"/><path d="M618.200 122.2v2" stroke="#226" stroke-width="0.7"/>
<text x="625.500" y="125.9" font-size="7.600px" fill="#f0f0f0" textLength="48.5" lengthAdjust="spacingAndGlyphs">Schedule Styles</text>
<path d="M620 133.7h4" stroke="#777" stroke-width="0.6" stroke-dasharray="0.800 0.800"/>
<rect x="616.400" y="131.9" width="3.600" height="3.600" fill="#e8e8f4" stroke="#889" stroke-width="0.5"/><path d="M617.200 133.7h2" stroke="#226" stroke-width="0.7"/><path d="M618.200 132.7v2" stroke="#226" stroke-width="0.7"/>
<text x="625.500" y="136.4" font-size="7.600px" fill="#f0f0f0" textLength="34" lengthAdjust="spacingAndGlyphs">Slab Styles</text>
<path d="M620 144.2h4" stroke="#777" stroke-width="0.6" stroke-dasharray="0.800 0.800"/>
<rect x="616.400" y="142.4" width="3.600" height="3.600" fill="#e8e8f4" stroke="#889" stroke-width="0.5"/><path d="M617.200 144.2h2" stroke="#226" stroke-width="0.7"/>
<text x="625.500" y="146.9" font-size="7.600px" fill="#f0f0f0" textLength="34.5" lengthAdjust="spacingAndGlyphs">Wall Styles</text>
<path d="M620 166.4h4" stroke="#777" stroke-width="0.6" stroke-dasharray="0.800 0.800"/>
<rect x="616.400" y="164.6" width="3.600" height="3.600" fill="#e8e8f4" stroke="#889" stroke-width="0.5"/><path d="M617.200 166.4h2" stroke="#226" stroke-width="0.7"/><path d="M618.200 165.4v2" stroke="#226" stroke-width="0.7"/>
<text x="625.500" y="169.1" font-size="7.600px" fill="#f0f0f0" textLength="54" lengthAdjust="spacingAndGlyphs">Dimension Styles</text>
<path d="M620 176.8h4" stroke="#777" stroke-width="0.6" stroke-dasharray="0.800 0.800"/>
<rect x="616.400" y="175.0" width="3.600" height="3.600" fill="#e8e8f4" stroke="#889" stroke-width="0.5"/><path d="M617.200 176.8h2" stroke="#226" stroke-width="0.7"/><path d="M618.200 175.8v2" stroke="#226" stroke-width="0.7"/>
<text x="625.500" y="179.5" font-size="7.600px" fill="#f0f0f0" textLength="68.5" lengthAdjust="spacingAndGlyphs">AEC Dimension Styles</text>
<path d="M620 187.7h4" stroke="#777" stroke-width="0.6" stroke-dasharray="0.800 0.800"/>
<rect x="616.400" y="185.9" width="3.600" height="3.600" fill="#e8e8f4" stroke="#889" stroke-width="0.5"/><path d="M617.200 187.7h2" stroke="#226" stroke-width="0.7"/><path d="M618.200 186.7v2" stroke="#226" stroke-width="0.7"/>
<text x="625.500" y="190.4" font-size="7.600px" fill="#f0f0f0" textLength="57.5" lengthAdjust="spacingAndGlyphs">MultiLeader Styles</text>
<path d="M620 198.2h4" stroke="#777" stroke-width="0.6" stroke-dasharray="0.800 0.800"/>
<rect x="616.400" y="196.4" width="3.600" height="3.600" fill="#e8e8f4" stroke="#889" stroke-width="0.5"/><path d="M617.200 198.2h2" stroke="#226" stroke-width="0.7"/><path d="M618.200 197.2v2" stroke="#226" stroke-width="0.7"/>
<text x="625.500" y="200.9" font-size="7.600px" fill="#f0f0f0" textLength="35" lengthAdjust="spacingAndGlyphs">Stair Styles</text>
<path d="M620 209.1h4" stroke="#777" stroke-width="0.6" stroke-dasharray="0.800 0.800"/>
<rect x="616.400" y="207.3" width="3.600" height="3.600" fill="#e8e8f4" stroke="#889" stroke-width="0.5"/><path d="M617.200 209.1h2" stroke="#226" stroke-width="0.7"/><path d="M618.200 208.1v2" stroke="#226" stroke-width="0.7"/>
<text x="625.500" y="211.8" font-size="7.600px" fill="#f0f0f0" textLength="32.5" lengthAdjust="spacingAndGlyphs">Rail Styles</text>
<path d="M620 219.7h4" stroke="#777" stroke-width="0.6" stroke-dasharray="0.800 0.800"/>
<rect x="616.400" y="217.9" width="3.600" height="3.600" fill="#e8e8f4" stroke="#889" stroke-width="0.5"/><path d="M617.200 219.7h2" stroke="#226" stroke-width="0.7"/><path d="M618.200 218.7v2" stroke="#226" stroke-width="0.7"/>
<text x="625.500" y="222.4" font-size="7.600px" fill="#f0f0f0" textLength="36.5" lengthAdjust="spacingAndGlyphs">Table Styles</text>
<path d="M629.500 147v8.500h4" fill="none" stroke="#777" stroke-width="0.6" stroke-dasharray="0.800 0.800"/>
<rect x="634.500" y="150.500" width="28.500" height="10" fill="#000" stroke="#c87830" stroke-width="0.6" stroke-dasharray="1 0.800"/>
<text x="636.500" y="158.200" font-size="7.600px" fill="#f4f4f4" textLength="25" lengthAdjust="spacingAndGlyphs">Standard</text>
</g>
<rect x="609.800" y="224.200" width="133.500" height="84.300" fill="#000"/>
<rect x="609.800" y="224.200" width="133.500" height="10.600" fill="#2e2e2e"/>
<path d="M677.800 224.200V308.500M712.600 224.200V308.500M730.200 224.200V234.800M609.800 234.800H743.300M609.800 247H743.300M609.800 258.800H743.300M609.800 271H743.300M609.800 282.900H743.300M609.800 294.700H743.300M609.800 306.500H743.300" stroke="#4a4a4a" stroke-width="0.8" fill="none"/>
<text x="612.200" y="232.300" font-size="7.600px" fill="#e8e8e8" textLength="28" lengthAdjust="spacingAndGlyphs">Property</text>
<path d="M668.800 231.500l2-3.300l2 3.300z" fill="none" stroke="#ccc" stroke-width="0.6"/>
<text x="681.400" y="232.300" font-size="7.600px" fill="#e8e8e8" textLength="19" lengthAdjust="spacingAndGlyphs">Value</text>
<text x="716.300" y="232.300" font-size="7.600px" fill="#e8e8e8" textLength="10" lengthAdjust="spacingAndGlyphs">C...</text>
<rect x="622.800" y="247.500" width="89.800" height="11" fill="#a5713f"/><rect x="622.800" y="247.500" width="89.800" height="0.800" fill="#9ac"/>
<path d="M616.800 241H622M616.800 241V289M616.800 289H622" fill="none" stroke="#888" stroke-width="0.6" stroke-dasharray="0.800 0.800"/>
<text x="623.700" y="243.500" font-size="7.600px" fill="#f0f0f0" textLength="45" lengthAdjust="spacingAndGlyphs">Number of c...</text>
<text x="623.700" y="255.700" font-size="7.600px" fill="#4a1a1a" textLength="41" lengthAdjust="spacingAndGlyphs">Components</text>
<rect x="614.800" y="251" width="4" height="4" fill="#f4f4f4" stroke="#889" stroke-width="0.5"/><path d="M615.700 253h2.300" stroke="#226" stroke-width="0.7"/>
<rect x="626" y="263" width="4" height="4" fill="#e8e8f4" stroke="#889" stroke-width="0.5"/><path d="M626.800 265h2.400M628 263.8v2.400" stroke="#226" stroke-width="0.7"/>
<text x="635" y="267.7" font-size="7.600px" fill="#f0f0f0" textLength="27.500" lengthAdjust="spacingAndGlyphs">Standard</text>
<rect x="626" y="275.2" width="4" height="4" fill="#e8e8f4" stroke="#889" stroke-width="0.5"/><path d="M626.800 277.2h2.400M628 276.0v2.400" stroke="#226" stroke-width="0.7"/>
<text x="635" y="279.9" font-size="7.600px" fill="#f0f0f0" textLength="27.500" lengthAdjust="spacingAndGlyphs">Standard</text>
<text x="623.700" y="291.500" font-size="7.600px" fill="#f0f0f0" textLength="48" lengthAdjust="spacingAndGlyphs">Cut Plane Hei...</text>
<text x="678.800" y="243" font-size="7.600px" fill="#f0f0f0">2</text><text x="713.700" y="243" font-size="7.600px" fill="#f0f0f0">1</text><text x="678.800" y="290.500" font-size="7.600px" fill="#f0f0f0">0"</text>
<rect x="609.400" y="310" width="133.200" height="65.400" fill="#fff"/><rect x="613.400" y="327.300" width="126.300" height="32.400" fill="#fff" stroke="#333" stroke-width="0.8"/><circle cx="613.400" cy="343.500" r="0.900" fill="#226"/><circle cx="739.700" cy="343.500" r="0.900" fill="#226"/>
<rect x="608.500" y="378.500" width="138" height="13.500" fill="#2c2c2c"/>
<rect x="609.400" y="379.500" width="63.600" height="11.300" fill="#787878"/><path d="M609.400 379.500h136" stroke="#b8703a" stroke-width="0.6" stroke-dasharray="1 0.800"/><circle cx="614.500" cy="384.500" r="1.700" fill="#e8c84a"/><circle cx="617.500" cy="387.500" r="1.700" fill="#ccc"/>
<text x="621.500" y="388.700" font-size="7.600px" fill="#f0f0f0" textLength="49.500" lengthAdjust="spacingAndGlyphs">Design Director</text>
<rect x="673.700" y="379.800" width="61.500" height="11" fill="#d2ab7c"/><rect x="676" y="382.300" width="6" height="7" fill="#f4f4f4" stroke="#555" stroke-width="0.5"/><path d="M677 384.500h4M677 386.500h4" stroke="#46a" stroke-width="0.7"/>
<text x="684.500" y="388.700" font-size="7.600px" fill="#1a1008" textLength="48" lengthAdjust="spacingAndGlyphs">Style Manager</text>
<rect x="746.800" y="70.200" width="21.200" height="322" fill="url(#gSideR)"/><path d="M747.200 70.200V392" stroke="#555" stroke-width="0.7"/>
<path d="M750 73.800h13" stroke="#777" stroke-width="1" stroke-dasharray="1 1"/>
<path d="M750 79.500h3.500v8q3.500 2 7 0v-8h3.500v11.500h-14z" fill="#5a5a5a" stroke="#7a7a7a" stroke-width="0.7"/><path d="M750.500 96.200h13" stroke="#888" stroke-width="1.200"/><path d="M765.500 94h-2l2-2z" fill="#ddd"/>
<path d="M751.500 100.500l11 12M756 99.500l8 9" stroke="#8a8a8a" stroke-width="0.8"/><path d="M750 110l10-10" stroke="#b85a2a" stroke-width="0.8"/><path d="M765.500 115h-2l2-2z" fill="#ddd"/>
<path d="M753 131l5-5" stroke="#ddd" stroke-width="1.200"/><circle cx="759.500" cy="124" r="2.200" fill="#d83a2a"/><circle cx="753" cy="131" r="1.500" fill="#4a7af0"/><path d="M757 124l3 3" stroke="#4a7af0" stroke-width="1"/>
<path d="M751 141.500h6v3h-6z" fill="none" stroke="#e8d84a" stroke-width="0.8"/><path d="M757.500 142q4-1 5.500 3" fill="none" stroke="#4a8af0" stroke-width="1"/><rect x="758.500" y="146" width="5.500" height="4.500" fill="#c83a2a"/><path d="M752 147l2 3l1-3" fill="none" stroke="#5a5" stroke-width="0.8"/><path d="M750.500 153h13" stroke="#888" stroke-width="1.200"/>
<path d="M751.500 163.5l3.500-4h8v8l-3.500 4h-8z" fill="#454545" stroke="#606060" stroke-width="0.8"/><path d="M751.500 163.5h8v8M759.500 163.5l3.500-4" fill="none" stroke="#606060" stroke-width="0.7"/>
<path d="M750.500 176.400h13" stroke="#888" stroke-width="1.200"/>
<path d="M751.500 184l3.500-4h8v8l-3.500 4h-8z" fill="#454545" stroke="#606060" stroke-width="0.8"/><path d="M751.500 184h8v8M759.500 184l3.500-4" fill="none" stroke="#606060" stroke-width="0.7"/>
<path d="M750.500 198h13" stroke="#888" stroke-width="1.200"/>
<path d="M751.500 207l3.500-4h8v8l-3.500 4h-8z" fill="#454545" stroke="#606060" stroke-width="0.8"/><path d="M751.500 207h8v8M759.500 207l3.500-4" fill="none" stroke="#606060" stroke-width="0.7"/>
<path d="M752 228l4-5.500l6 2.500v5l-4 4l-6-2z" fill="#454545" stroke="#606060" stroke-width="0.8"/>
<path d="M752 244l4-5.500l6 2.500v5l-4 4l-6-2z" fill="#454545" stroke="#606060" stroke-width="0.8"/>
<path d="M752 258l5-3l6 4l-5 4z" fill="#e8d88a" stroke="#fff" stroke-width="0.5"/><path d="M757 263.500l2 3l4-2.500" fill="none" stroke="#4a8af0" stroke-width="1"/><circle cx="762.500" cy="266.500" r="0.800" fill="#4a8af0"/><circle cx="755.500" cy="266" r="0.800" fill="#4a8af0"/>
<circle cx="757" cy="279.6" r="5" fill="#454545" stroke="#606060" stroke-width="0.8"/><path d="M753.500 279.6h7" stroke="#606060" stroke-width="0.8"/>
<path d="M752 299l4-5.500l6 2.500v5l-4 4l-6-2z" fill="#454545" stroke="#606060" stroke-width="0.8"/>
<path d="M752 318l4-5.500l6 2.500v5l-4 4l-6-2z" fill="#454545" stroke="#606060" stroke-width="0.8"/>
<circle cx="757" cy="334.5" r="5" fill="#454545" stroke="#606060" stroke-width="0.8"/><path d="M753.500 334.5h7" stroke="#606060" stroke-width="0.8"/>
<path d="M751.500 346.5h11l-4 5v5h-3v-5z" fill="#454545" stroke="#606060" stroke-width="0.8"/>
<path d="M755 363.5h4v3.500h3.500v4h-3.500v3.500h-4v-3.500h-3.500v-4h3.500z" fill="#5c5c5c" stroke="#727272" stroke-width="0.6"/>
<defs><linearGradient id="gBtb" x1="0" x2="0" y1="0" y2="1"><stop offset="0" stop-color="#2c2c2c"/><stop offset="0.5" stop-color="#3a3a3a"/><stop offset="1" stop-color="#4a4a4a"/></linearGradient><linearGradient id="gStat" x1="0" x2="0" y1="0" y2="1"><stop offset="0" stop-color="#242424"/><stop offset="0.35" stop-color="#353535"/><stop offset="1" stop-color="#4a4a4a"/></linearGradient></defs>
<rect x="0" y="392" width="768" height="23.700" fill="url(#gBtb)"/><rect x="0" y="391.500" width="768" height="1.500" fill="#1e1e1e"/><rect x="0" y="415.500" width="768" height="3" fill="#262626"/>
<path d="M4.500 396v17" stroke="#777" stroke-width="1" stroke-dasharray="1 1"/>
<path d="M9 403l4-3.500l5 5l-4 4z" fill="#2a2a2a" stroke="#d8402a" stroke-width="1.200"/><path d="M12 399l5 5" stroke="#e8d84a" stroke-width="1.200"/><circle cx="17" cy="399.500" r="0.900" fill="#eee"/>
<path d="M22.500 401l6.500 7M29 401l-6.500 7" stroke="#6e6e6e" stroke-width="2.200"/>
<rect x="34.500" y="400" width="9.500" height="9.800" rx="1" fill="#444" stroke="#6a6a6a" stroke-width="0.8"/><path d="M36 403h6.500M36 406h6.500M38.500 401.500v7M41 401.500v7" stroke="#555" stroke-width="0.6"/>
<path d="M48.300 396v20" stroke="#8a8a8a" stroke-width="1"/>
<text x="50.9" y="402.800" font-size="7.600px" fill="#f0f0f0" textLength="22.4" lengthAdjust="spacingAndGlyphs">Scale X</text>
<rect x="50.4" y="405.700" width="31.300" height="8.500" fill="#262626" stroke="#6a6a6a" stroke-width="0.7"/>
<path d="M73.4 405.700v8.500M73.4 410h8.300" stroke="#6a6a6a" stroke-width="0.7"/><path d="M76.4 408.600l1.200-1.300l1.200 1.300M76.4 411.500l1.200 1.300l1.200-1.300" fill="none" stroke="#999" stroke-width="0.6"/>
<text x="52.9" y="412.800" font-size="7px" fill="#666">1</text>
<text x="83.8" y="402.800" font-size="7.600px" fill="#f0f0f0" textLength="22.6" lengthAdjust="spacingAndGlyphs">Scale Y</text>
<rect x="83.4" y="405.700" width="31.300" height="8.500" fill="#262626" stroke="#6a6a6a" stroke-width="0.7"/>
<path d="M106.4 405.700v8.500M106.4 410h8.300" stroke="#6a6a6a" stroke-width="0.7"/><path d="M109.4 408.600l1.200-1.300l1.200 1.300M109.4 411.500l1.200 1.300l1.200-1.300" fill="none" stroke="#999" stroke-width="0.6"/>
<text x="85.9" y="412.800" font-size="7px" fill="#666">1</text>
<text x="116.8" y="402.800" font-size="7.600px" fill="#f0f0f0" textLength="18.2" lengthAdjust="spacingAndGlyphs">Size X</text>
<rect x="116.4" y="405.700" width="31.300" height="8.500" fill="#262626" stroke="#6a6a6a" stroke-width="0.7"/>
<path d="M139.4 405.700v8.500M139.4 410h8.300" stroke="#6a6a6a" stroke-width="0.7"/><path d="M142.4 408.600l1.200-1.300l1.200 1.300M142.4 411.500l1.200 1.300l1.200-1.300" fill="none" stroke="#999" stroke-width="0.6"/>
<text x="118.9" y="412.800" font-size="7px" fill="#666">0"</text>
<text x="149.9" y="402.800" font-size="7.600px" fill="#f0f0f0" textLength="17.7" lengthAdjust="spacingAndGlyphs">Size Y</text>
<rect x="149.4" y="405.700" width="31.300" height="8.500" fill="#262626" stroke="#6a6a6a" stroke-width="0.7"/>
<path d="M172.4 405.700v8.500M172.4 410h8.300" stroke="#6a6a6a" stroke-width="0.7"/><path d="M175.4 408.600l1.200-1.300l1.200 1.300M175.4 411.500l1.200 1.300l1.200-1.300" fill="none" stroke="#999" stroke-width="0.6"/>
<text x="151.9" y="412.800" font-size="7px" fill="#666">0"</text>
<text x="182.7" y="402.800" font-size="7.600px" fill="#f0f0f0" textLength="16.7" lengthAdjust="spacingAndGlyphs">Pos X</text>
<rect x="182.4" y="405.700" width="31.300" height="8.500" fill="#262626" stroke="#6a6a6a" stroke-width="0.7"/>
<path d="M205.4 405.700v8.500M205.4 410h8.300" stroke="#6a6a6a" stroke-width="0.7"/><path d="M208.4 408.600l1.200-1.300l1.200 1.300M208.4 411.500l1.200 1.300l1.200-1.300" fill="none" stroke="#999" stroke-width="0.6"/>
<text x="184.9" y="412.800" font-size="7px" fill="#666">0"</text>
<text x="215.8" y="402.800" font-size="7.600px" fill="#f0f0f0" textLength="16.9" lengthAdjust="spacingAndGlyphs">Pos Y</text>
<rect x="215.4" y="405.700" width="31.300" height="8.500" fill="#262626" stroke="#6a6a6a" stroke-width="0.7"/>
<path d="M238.4 405.700v8.500M238.4 410h8.300" stroke="#6a6a6a" stroke-width="0.7"/><path d="M241.4 408.600l1.200-1.300l1.200 1.300M241.4 411.500l1.200 1.300l1.200-1.300" fill="none" stroke="#999" stroke-width="0.6"/>
<text x="217.9" y="412.800" font-size="7px" fill="#666">0"</text>
<text x="248.5" y="402.800" font-size="7.600px" fill="#f0f0f0" textLength="22" lengthAdjust="spacingAndGlyphs">Delta X</text>
<rect x="248.4" y="405.700" width="31.300" height="8.500" fill="#262626" stroke="#6a6a6a" stroke-width="0.7"/>
<path d="M271.4 405.700v8.500M271.4 410h8.300" stroke="#6a6a6a" stroke-width="0.7"/><path d="M274.4 408.600l1.200-1.300l1.200 1.300M274.4 411.500l1.200 1.300l1.200-1.300" fill="none" stroke="#999" stroke-width="0.6"/>
<text x="250.9" y="412.800" font-size="7px" fill="#666">0"</text>
<text x="281.5" y="402.800" font-size="7.600px" fill="#f0f0f0" textLength="22" lengthAdjust="spacingAndGlyphs">Delta Y</text>
<rect x="281.4" y="405.700" width="31.300" height="8.500" fill="#262626" stroke="#6a6a6a" stroke-width="0.7"/>
<path d="M304.4 405.700v8.500M304.4 410h8.300" stroke="#6a6a6a" stroke-width="0.7"/><path d="M307.4 408.600l1.200-1.300l1.200 1.300M307.4 411.500l1.200 1.300l1.200-1.300" fill="none" stroke="#999" stroke-width="0.6"/>
<text x="283.9" y="412.800" font-size="7px" fill="#666">0"</text>
<text x="314.3" y="402.800" font-size="7.600px" fill="#f0f0f0" textLength="10.4" lengthAdjust="spacingAndGlyphs">Rot</text>
<rect x="314.4" y="405.700" width="31.300" height="8.500" fill="#262626" stroke="#6a6a6a" stroke-width="0.7"/>
<path d="M337.4 405.700v8.500M337.4 410h8.300" stroke="#6a6a6a" stroke-width="0.7"/><path d="M340.4 408.600l1.200-1.300l1.200 1.300M340.4 411.500l1.200 1.300l1.200-1.300" fill="none" stroke="#999" stroke-width="0.6"/>
<text x="316.9" y="412.800" font-size="7px" fill="#666">0</text>
<path d="M348.200 396v20" stroke="#8a8a8a" stroke-width="1"/>
<path d="M352.500 409v-4h5v-3h4" fill="none" stroke="#eee" stroke-width="0.9"/><rect x="352" y="405" width="5" height="4" fill="none" stroke="#eee" stroke-width="0.8"/><rect x="358.500" y="400.500" width="2.500" height="2.500" fill="#4a7af0"/>
<rect x="364.500" y="400.500" width="4" height="4" fill="none" stroke="#eee" stroke-width="0.8"/><rect x="369.500" y="405.500" width="4" height="4" fill="none" stroke="#eee" stroke-width="0.8"/><path d="M366 406.500l5-3" stroke="#eee" stroke-width="0.8"/>
<path d="M378 408q2-7 8-6" fill="none" stroke="#eee" stroke-width="0.9"/><path d="M383 404l4 5" stroke="#4a7af0" stroke-width="1.300"/>
<path d="M390.600 396v20" stroke="#8a8a8a" stroke-width="1"/>
<rect x="393.200" y="398.800" width="11.600" height="12.500" fill="#3a3a3a" stroke="#c87830" stroke-width="0.7" stroke-dasharray="1.200 0.800"/>
<rect x="394.5" y="400.500" width="9" height="9" fill="#5a4a5a" stroke="#c8a8c8" stroke-width="0.6"/><path d="M394.5 400.500l9 9h-9z" fill="#d838d8"/><path d="M394.5 400.500l9 9" stroke="#e8a04a" stroke-width="0.8"/>
<path d="M396 409.500l6-1.500" stroke="#e85a2a" stroke-width="1"/>
<rect x="407.5" y="400.500" width="9" height="9" fill="#5a4a5a" stroke="#c8a8c8" stroke-width="0.6"/><path d="M407.5 400.500l9 9h-9z" fill="#d838d8"/><path d="M407.5 400.500l9 9" stroke="#e8a04a" stroke-width="0.8"/>
<path d="M412.5 400v4.500h4.500" fill="#444" stroke="#eee" stroke-width="0.7"/><rect x="414" y="399.500" width="3.500" height="3" fill="#ddd"/>
<rect x="420.5" y="400.500" width="9" height="9" fill="#5a4a5a" stroke="#c8a8c8" stroke-width="0.6"/><path d="M420.5 400.500l9 9h-9z" fill="#d838d8"/><path d="M420.5 400.500l9 9" stroke="#e8a04a" stroke-width="0.8"/>
<path d="M425.5 400v4.500h4.500" fill="#444" stroke="#eee" stroke-width="0.7"/><rect x="427" y="399.500" width="3.500" height="3" fill="#ddd"/>
<rect x="433.5" y="400.500" width="9" height="9" fill="#5a4a5a" stroke="#c8a8c8" stroke-width="0.6"/><path d="M433.5 400.500l9 9h-9z" fill="#d838d8"/><path d="M433.5 400.500l9 9" stroke="#e8a04a" stroke-width="0.8"/>
<path d="M438.5 400v4.500h4.500" fill="#444" stroke="#eee" stroke-width="0.7"/><rect x="440" y="399.500" width="3.500" height="3" fill="#ddd"/>
<path d="M446.400 396v20" stroke="#8a8a8a" stroke-width="1"/>
<path d="M452 403h4.500a2.500 2.500 0 0 1 2.500 2.500v4" fill="none" stroke="#aaa" stroke-width="1.200"/><path d="M451 403l3-2.500v5z" fill="#aaa"/>
<path d="M465 400.500l7 8M472 400.500l-3 4" stroke="#d8402a" stroke-width="1.300"/><circle cx="470.500" cy="408" r="1.500" fill="#4a7af0"/><path d="M464 404h3" stroke="#e8d84a" stroke-width="1"/>
<path d="M478.500 409.500l3.500-8l3.500 8z" fill="none" stroke="#d8402a" stroke-width="1"/><path d="M478 406h8" stroke="#eee" stroke-width="0.8"/><circle cx="482" cy="407.500" r="1" fill="#d8402a"/>
<path d="M490 409.500v-3q0-1 1.500-1.500v-2q2.500-2.500 5 0v2q1.500 0.500 1.500 1.500v3z" fill="#555" stroke="#7a7a7a" stroke-width="0.8"/>
<rect x="502" y="401" width="8.500" height="8" fill="none" stroke="#e88" stroke-width="0.8"/><g fill="#4a7af0"><rect x="500.800" y="399.800" width="2.400" height="2.400"/><rect x="509.300" y="399.800" width="2.400" height="2.400"/><rect x="500.800" y="407.800" width="2.400" height="2.400"/><rect x="509.300" y="407.800" width="2.400" height="2.400"/></g><path d="M504 403.500l4.500 3.500" stroke="#d8402a" stroke-width="0.9"/>
<rect x="514.500" y="400.500" width="9" height="9" rx="1.500" fill="#666" stroke="#888" stroke-width="0.7"/><path d="M517 403l4 4M521 403l-4 4" stroke="#999" stroke-width="1"/>
<rect x="527" y="403" width="6" height="6" fill="#5a5a5a" stroke="#808080" stroke-width="0.7"/><path d="M533.5 401v3M532 401h3" stroke="#808080" stroke-width="0.8"/>
<rect x="539.5" y="403" width="6" height="6" fill="#5a5a5a" stroke="#808080" stroke-width="0.7"/><path d="M546.0 401v3M544.5 401h3" stroke="#808080" stroke-width="0.8"/>
<path d="M551 409l3-5h6l-3 5z" fill="#d8402a" stroke="#f0a090" stroke-width="0.5"/><path d="M555 402l5 1" stroke="#4a7af0" stroke-width="1.300"/>
<rect x="564.500" y="401" width="8.500" height="8" fill="none" stroke="#e88" stroke-width="0.8"/><g fill="#4a7af0"><rect x="563.300" y="399.800" width="2.400" height="2.400"/><rect x="571.800" y="399.800" width="2.400" height="2.400"/><rect x="563.300" y="407.800" width="2.400" height="2.400"/><rect x="571.800" y="407.800" width="2.400" height="2.400"/></g><rect x="566.500" y="403" width="4.500" height="4" fill="#8ab"/>
<rect x="0" y="418.500" width="768" height="11.500" fill="url(#gStat)"/>
<text x="5.900" y="426.800" font-size="7.600px" fill="#f0f0f0" textLength="48" lengthAdjust="spacingAndGlyphs">Select object(s)</text>
<rect x="476" y="419.500" width="43" height="10.500" fill="#2e2e2e"/>
<text x="479.700" y="427.500" font-size="6.800px" fill="#e0e0e0" textLength="17.600" lengthAdjust="spacingAndGlyphs">SNAP</text><text x="503" y="427.500" font-size="6.800px" fill="#e0e0e0" textLength="12.700" lengthAdjust="spacingAndGlyphs">GEO</text>
<path d="M500.300 420v10M518.300 420v10M696.500 420v10M729 420v10" stroke="#777" stroke-width="0.7"/>
<rect x="534.4" y="419.800" width="43" height="10.500" fill="#000" stroke="#777" stroke-width="0.6"/>
<path d="M530.5 420.500v4.500M528.5 420.500h4" stroke="#ddd" stroke-width="0.7"/><rect x="529.0" y="425.500" width="3" height="3.500" fill="#ccc"/>
<text x="536.4" y="428" font-size="7.600px" fill="#f0f0f0" textLength="17" lengthAdjust="spacingAndGlyphs">67'-2"</text>
<rect x="592.2" y="419.800" width="43" height="10.500" fill="#000" stroke="#777" stroke-width="0.6"/>
<path d="M588.4 420.500v4.500M586.4 420.500h4" stroke="#ddd" stroke-width="0.7"/><rect x="586.9" y="425.500" width="3" height="3.500" fill="#ccc"/>
<text x="594.2" y="428" font-size="7.600px" fill="#f0f0f0" textLength="29.5" lengthAdjust="spacingAndGlyphs">57'-6 3/4"</text>
<rect x="649.6" y="419.800" width="43" height="10.500" fill="#000" stroke="#777" stroke-width="0.6"/>
<path d="M646.6 420.500v4.500M644.6 420.500h4" stroke="#ddd" stroke-width="0.7"/><rect x="645.1" y="425.500" width="3" height="3.500" fill="#ccc"/>
<text x="651.6" y="428" font-size="7.600px" fill="#8a8a8a" textLength="5.5" lengthAdjust="spacingAndGlyphs">0"</text>
<text x="699.300" y="427.500" font-size="6.800px" fill="#e0e0e0" textLength="14" lengthAdjust="spacingAndGlyphs">99%</text>
<text x="732.800" y="427.500" font-size="6.800px" fill="#e8e8e8" textLength="24.200" lengthAdjust="spacingAndGlyphs">2:06 PM</text>
</svg>
<svg class="abs" style="left:31px;top:80px" width="563.5" height="299.5" viewBox="31 80 563.5 299.5" font-family="Liberation Sans, sans-serif">
<defs>
<g id="lt"><circle r="2.8" fill="none"/><path d="M-5.5 0H5.5M0 -5.5V5.5"/></g>
<g id="ol"><circle r="2.900" fill="none"/><path d="M-6.500 -1.100H2.500M-6.500 1.100H2.500"/></g>
<g id="olr"><circle r="2.900" fill="none"/><path d="M6.500 -1.100H-2.500M6.500 1.100H-2.500"/></g>
<g id="olv"><circle r="2.900" fill="none"/><path d="M-1.100 -2.500V6.500M1.100 -2.500V6.500"/></g>
</defs>
<!-- thin black / grey lines -->
<g fill="none" stroke="#3a3a3a" stroke-width="0.7">
<path d="M31 105.5H88.5M41.5 102V184M38.5 103.5l3 3.5M86 107l3-3.5"/>
<path d="M88.5 85.5V124"/>
<path d="M92.5 202H179.8M179.8 199V262.2M179.800 262.200L171 279M170.300 278L209 299.600M207.500 300.300L212 290.500"/>
<path d="M45.5 229.4H84M43.6 229.4V272M85 229.4V272M31 272.4H88M45.4 275V300M87.5 275V300M45.4 297.3H87.5"/>
<rect x="41.6" y="270.4" width="4" height="4" fill="#fff"/><rect x="83.6" y="270.4" width="4" height="4" fill="#fff"/>
<path d="M126.500 234V263M155.300 234V263" stroke="#8c8c8c"/>
<path d="M92.500 284H120.800M109 284V319.500M92.500 319.500H120.800" stroke="#8c8c8c"/>
<g stroke="#8c8c8c"><circle cx="99.200" cy="292" r="4.200"/><circle cx="114.200" cy="292" r="4.200"/><circle cx="99.200" cy="312" r="4.200"/><circle cx="114.200" cy="312" r="4.200"/></g>
<path d="M92.500 346H125.200V380M94.400 346V380M122.700 346V380" stroke="#808080"/>
<path d="M300 81.7H319.8V142.6H296"/>
<path d="M401.7 80V378"/>
<path d="M270.500 211H295M273 211V254.900H296M270.500 254.900H273M294.900 230.700H343.600M343.600 228V251.400"/>
<path d="M343.6 251.8H546"/>
<path d="M271.2 291.3H393.8M306.7 291.3V303M343.1 291.3V299M371.9 291.3V303M386.4 291.3V316"/>
<path d="M386.4 302H405M386.4 318H405M386.4 375.4H405"/>
<path d="M459.3 276.9H594M459.3 275V317M550.7 261V300"/>
<path d="M431 303.8H476M564.8 303.8H594"/>
<path d="M555 307.400V341"/>
<path d="M539.7 344.5V378M582.3 344.5V378M586.5 344.5V378"/>
<path d="M566.300 84V162"/>
</g>
<path d="M269.6 292.9l3.200-3.200M305.1 292.9l3.200-3.200M341.5 292.9l3.200-3.200M370.3 292.9l3.200-3.200M384.8 292.9l3.200-3.200M400.0 303.6l3.200-3.200M400.0 319.6l3.200-3.200M400.0 377.0l3.200-3.200M400.1 253.4l3.200-3.200M457.7 278.5l3.200-3.200M549.1 278.5l3.200-3.200M293.3 232.3l3.200-3.200M342.0 232.3l3.200-3.200M90.9 203.6l3.200-3.200M178.2 203.6l3.200-3.200M43.8 298.9l3.200-3.200M85.9 298.9l3.200-3.200M318.2 83.3l3.200-3.200M318.2 144.2l3.200-3.200M271.4 212.6l3.200-3.200M271.4 256.5l3.200-3.200M554.3 308.6l3.200-3.200M554.3 342.6l3.200-3.200" fill="none" stroke="#333" stroke-width="0.600"/>
<!-- fireplace -->
<path d="M595 84H550.7a6 6 0 0 0 -6 6V156.3a6 6 0 0 0 6 6H595" fill="none" stroke="#4a4a4a" stroke-width="0.700"/><path d="M566 84H595M566 162.300H595" fill="none" stroke="#222" stroke-width="1.200"/><path d="M573 80L575.500 82.800" stroke="#6aa86a" stroke-width="0.800"/><path d="M589.500 80V83" stroke="#a44db4" stroke-width="0.800"/>
<g fill="none" stroke="#777" stroke-width="1.6">
<path d="M570.8 98.6L593 107.6M570.8 147.4L593 138.6"/>
</g>
<!-- purple -->
<g fill="none" stroke="#a44db4" stroke-width="0.8">
<path d="M92.5 220.6H191.3L223 237.1L233.2 257.6L211.8 290"/>
<path d="M106.7 220.6V281.3H110V322.3H106.7V378"/>
<path d="M92.5 234.4H188.5L231.3 259.4"/>
<path d="M120.8 346V263H179.2L217.4 283.6"/>
<path d="M92.5 346H120.8"/>
<path d="M110.500 220.400Q112 214 116 212Q121 209 126 212Q130 214 131.500 220.400M137.800 220.400Q139.300 214 143.300 212Q148.500 209 153.500 212Q158 214 159.500 220.400M164.700 220.400Q166 214 170 212Q175 209 180 212Q184 214 185.600 220.400"/>
<path d="M196 224Q198 220 203 219.200Q209 218.500 213 221.500Q217 225 215.500 233.400"/>
<path d="M292.400 82V142.600H299.500" stroke-width="2"/><path d="M297.600 82V142.600M299.500 82V142.600" stroke-width="0.8"/>
<path d="M577.2 162.3V255M589.8 162.3V255"/>
<path d="M464.700 323.300H581M464.700 327.100H582.500"/>
<path d="M311.2 339.7H339.6V307.3"/>
<path d="M277.600 308V330M277.600 342V375" stroke-dasharray="4 1" stroke-opacity="0.75" stroke-width="0.700"/>
</g>
<!-- green doors -->
<g fill="none" stroke="#6aa86a" stroke-width="0.8">
<path d="M88 122L62 96.3M87 123.4L61 97.6M61 96.5A38 38 0 0 1 88.3 85.6"/>
<path d="M110.2 82.5L137.6 108.6M111.6 81.2L139 107.2M138.4 107.8A38.3 38.3 0 0 0 148.6 81.6"/>
<path d="M87.8 137.2L61.2 163.4M89 138.2L62.4 164.6M61.8 164A38 38 0 0 0 88.3 175"/>
<path d="M46 228.6L72.4 254.6M47.2 227.4L73.8 253.4M73.1 254A37.6 37.6 0 0 0 83.6 229"/>
<path d="M214 375.4L241.8 348M215.4 376.6L243 349.4M242.4 348.7A38.9 38.9 0 0 1 253.6 378"/>
<path d="M271 311.2L251.2 331.4M272.2 312.2L252.4 332.4M251.8 331.8Q262 337 269.3 340.2Q262 343 251.4 348.7M251 349.2L271 369M252.2 348.2L272.2 368"/>
<path d="M339.2 260.2L311.6 287.6M340.4 261.4L313 288.6M312.3 288Q324 297.5 341.4 298.8"/>
<path d="M357.6 344.8L382.2 370M358.8 343.6L383.4 368.8M358.1 344.2A35.6 35.6 0 0 1 381.5 334.8"/>
<path d="M550 261.8L576.6 287M551.2 260.4L577.8 285.6M577.2 286.2A36.6 36.6 0 0 1 551.9 298"/>
<path d="M481.6 305L491.4 293.3L501 303.8M520.2 303.8L529.6 293.3L539 305" stroke-width="1.2"/>
<path d="M577 162.3L565.1 173.5L574.4 178.1L565.1 183.7L577 192.1L565.1 202.3L574.4 206.6L565.1 210.7L577 226L566 236L577 246" stroke-width="1.2"/>
</g>
<!-- olive -->
<g fill="none" stroke="#9a9a4a" stroke-width="0.75">
<path d="M44.5 80Q49.5 104 45.5 122.8M55 80Q51 104 53 119"/>
<path d="M31 164Q44 166 57.7 177T76.5 191"/>
<path d="M104.8 195Q112 179 124 165Q135 153 150 143.5Q160 137 178.8 130Q197 126.4 213 126"/>
<path d="M219.5 127Q232 135 245.8 151Q256 163 258.4 177Q263 200 259.9 224Q257 235 260 244.5Q264 256 275 264Q288 270 299 268Q302 266.500 303.400 263.500"/>
<path d="M35 241.7L31 254"/>
<path d="M183.9 252Q184 262 198.8 268.7Q212 269 220.1 259.4M193.7 259.4Q197 262.6 209.9 259.4Q213 258 214.6 255.7"/>
<path d="M170.400 325Q177 306 188.300 295Q198 286 211.800 279.900Q226 275.500 245.200 275.600Q262 278 271.200 286L278.700 292.600"/>
<path d="M451.5 125.5Q480 134 498.1 150.4Q512 160 518.2 169M530.5 181.2Q545 202.4 554 224.7Q555 235 554.6 244.8"/>
<path d="M448.8 130Q451 147 456.8 166Q463 176 470.2 186.8M478 199.7Q488 211 495.9 218Q508 226 520.5 231.4L548.4 243"/>
<path d="M538 128.4Q540 135 543.9 141.4Q552 158 558.4 182.3Q561.5 200 561.3 215.8L560.7 244.8"/>
<path d="M434 274L423.5 279.8Q410 288.5 394.9 291.6Q380 293.4 363.7 293.2M425 282.4Q428 292 434 300.6Q447 328 453.4 358.6L454.6 378"/>
<path d="M430 274.5Q444 267.5 460.5 265.2H486.2Q500 267 512 273.4Q524 279 530.8 283.9Q537 288 540.2 293.5"/>
<path d="M376 323Q363.7 319 352.5 326.3L349.8 331M376 328.5Q369 331 365.9 337.5Q362 342 357 344.2Q349 349 341.4 348.6Q334 347.5 328 343.5Q321 337 318.4 328"/>
<path d="M584 314L594 307.3M588 336Q572 341 566 352L562.6 361"/>
<rect x="140.6" y="302.2" width="57.1" height="56.8"/><path d="M140.6 329.9H197.7M169.4 302.2V359"/>
<rect x="340.2" y="331.4" width="17.9" height="9.4" fill="#fff"/>
<!-- fan -->
<circle cx="447.9" cy="124.4" r="2.8"/>
<path d="M444.600 102.400H451.300L450 121.600H445.900ZM444.600 146.400H451.300L450 127.200H445.900ZM425.600 121.200V127.600L445.100 126.400V122.400ZM470.200 121.200V127.600L450.700 126.400V122.400Z"/>
<use href="#lt" x="216.5" y="126"/><use href="#lt" x="537.2" y="125.4"/><use href="#lt" x="423.5" y="279.8"/><use href="#lt" x="562.4" y="364.4"/><use href="#lt" x="183.9" y="249.2"/><use href="#lt" x="318.4" y="325.2"/>
<circle cx="193.7" cy="256.6" r="2.8"/>
<use href="#olr" x="96" y="211.5"/><use href="#ol" x="84" y="322.3"/><use href="#olr" x="96.3" y="268.6"/><use href="#olr" x="303.4" y="222.9"/><use href="#olr" x="455.3" y="328.8"/><use href="#olv" x="122.7" y="238.5"/><use href="#olv" x="145.9" y="238.5"/><use href="#olv" x="332.4" y="310"/><use href="#olv" x="567.8" y="246.5"/>
<circle cx="582.3" cy="315.5" r="1.8"/><circle cx="590" cy="335.9" r="1.8"/>
<path d="M80 190.6H87M82 189l3 3M82 192l3-3M93 195.5H99M94.5 194l3 3M94.500 197l3-3M372 323H380M373.500 321.500l3 3M372 328.500H380M373.500 327l3 3"/>
</g>
<!-- blue -->
<g fill="none" stroke="#4a4af0" stroke-width="0.75">
<path d="M267 160H283.400L296 144.200" stroke="#6a6af5"/>
<path d="M192 111.500H242.400" stroke="#8a8af8" stroke-width="1.300"/>
<rect x="161.600" y="236.200" width="17.600" height="26" stroke-width="0.9" stroke="#5a5ae0"/><rect x="164.400" y="240" width="14.800" height="21.300" stroke="#7a7ae0" stroke-width="0.6"/>
<path d="M161.600 236.200H189.500L196 242.700M164.400 240H188L192.300 243.600" stroke="#8a8ae8" stroke-width="0.6"/>
<path d="M192.300 243.600L209 250.100L196 271.500L180.200 261.300ZM192.800 246.200L206.200 251.400L195.200 269L183.200 260.800Z" stroke="#6a6ae0" stroke-width="0.6"/>
<ellipse cx="325.700" cy="323.400" rx="11.200" ry="12"/><ellipse cx="325.700" cy="323.400" rx="9.200" ry="10"/>
<rect x="312.300" y="345.300" width="11.200" height="25"/><ellipse cx="335.800" cy="358" rx="10.300" ry="8.600"/>
<rect x="465.200" y="364.400" width="22.200" height="16"/><path d="M465.200 364.400L476.300 378L487.400 364.400"/>
<path d="M539.700 344.500L573 378M580 346.900L548.400 378"/>
</g>
<rect x="161.400" y="236" width="4" height="26.400" fill="#7a7ad8" display="none"/>
<!-- thick black walls -->
<g fill="none" stroke="#151515" stroke-width="1.300" stroke-linejoin="miter">
<path d="M88.300 80V85.500H92.600V81.700H110.500"/>
<path d="M31 128.400H88.300V124H92.500V137H88.300V132.200H31"/>
<path d="M34 187.500V184H40.400V222.300H44.500V228H31M34 187.500H36.600V224H31"/>
<path d="M84 228.400V223.600H88.300V175.200H92.200V378M88.300 228V378"/>
<path d="M294.900 210.600V255.900H339.600V260.800H343.600V251.400H299.400V210.600Z"/>
<path d="M271.200 291V311.600H275.300V307.300H311.200V374.300H381.500V369.800H386.400V378"/>
<path d="M271.200 304.400H339.600V298.800H343.600V303.300H372.600L386.400 316.300V334.600H381.500V320.700L369.300 307.300H311.200"/>
<path d="M307.400 307.300V378"/>
<path d="M271.200 380V368.500H275.300V375.200H307.400"/>
<path d="M546 251.600H594M546 251.600V260.900H550.700V255.800H589.400L594 252.500"/>
<path d="M460 380V316.700L475.700 303.800H481.600V306.900H476.400L464.700 317.900V341H582.700V327.200M594 328.900H586V344.500"/>
<path d="M538.700 307.400V303.600H546V299.500H550.300V303.600H565.600L585.100 324.300H594M538.700 307.400H563.200L582.700 327.200"/>
<path d="M464.700 344.500H594M464.700 344.500V380M506.900 344.500V380M511.300 344.500V380"/>
<path d="M566 84V98.300H570.300V88H594"/>
<path d="M566 162V148.400H570.300V158.600H594"/>
</g>
<g fill="none" stroke="#666" stroke-width="1.800">
<path d="M148 81.400H202.400M275.300 81.400H299.500"/>
<path d="M184.500 380V375.300H205.500V373.200H214.700V380M253.300 380V375.300H271.200" stroke="#222" stroke-width="1.300"/>
</g>
<!-- diamonds -->
<g fill="#fff" stroke="#4a4af0" stroke-width="0.800">
<path d="M77.500 91.200l7.500 7.500l-7.500 7.500l-7.500-7.500Z"/>
<path d="M132.800 78.500l7.500 7.500l-7.500 7.500l-7.500-7.500Z"/>
<path d="M84.500 160.500l7.500 7.500l-7.500 7.500l-7.500-7.500Z"/>
<path d="M68.400 212.900l7.500 7.500l-7.500 7.500l-7.500-7.500Z"/>
<path d="M245.800 332.400l7.500 7.500l-7.500 7.500l-7.500-7.500Z"/>
<path d="M336.200 273.500l7 7l-7 7l-7-7Z"/>
<path d="M379.800 342.100l7 7l-7 7l-7-7Z"/>
<path d="M560.800 282.300l7 7l-7 7l-7-7Z"/>
<path d="M509.700 293.300l7 7l-7 7l-7-7Z"/>
<path d="M236.300 374.500l7 7l-7 7l-7-7Z"/>
</g>
<g fill="#4a4af0" font-size="8px" text-anchor="middle">
<text x="77.500" y="101.600">6</text><text x="132.800" y="88.900">6</text><text x="84.500" y="170.900">5</text><text x="68.400" y="223.300">7</text>
<text x="245.800" y="342.800" font-weight="bold" font-size="7.500px">16</text><text x="336.200" y="283.300" font-size="7.500px">5</text><text x="379.800" y="351.900" font-size="7.500px">3</text><text x="560.800" y="292.100" font-size="7.500px">5</text><text x="509.700" y="303" font-size="7px" font-weight="bold">11</text>
</g>
<!-- olive text -->
<g fill="#a39838" font-size="6.800px" font-weight="bold" text-anchor="middle">
<text x="155.400" y="87.300">$</text><text x="45.500" y="127.300">$</text><text x="51.700" y="127.300">$</text><text x="36.600" y="234">$</text>
<text x="303.800" y="263.100">$</text><text x="279.700" y="298.700">$</text><text x="362.600" y="297.500">$</text><text x="540.900" y="299.100">$</text>
<text x="548.800" y="249.200">$</text><text x="554.300" y="249.200">$</text><text x="559.800" y="249.200">$</text>
<text x="214.600" y="256.300" transform="rotate(25 214.600 254)">$</text><text x="220.500" y="259.300" transform="rotate(25 220.500 257)">$</text>
</g>
<!-- black text -->
<g fill="#222" font-size="6.500px">
<text x="159.500" y="91.200">3</text><text x="56.500" y="129.300">3</text><text x="309.500" y="267.100">3</text>
<text x="105.800" y="183.300" transform="rotate(90 105.800 183.300)" text-anchor="middle">3</text>
</g>
<text x="194.500" y="108.400" font-size="11.300px" fill="#1a1a1a" textLength="48.500" lengthAdjust="spacingAndGlyphs">DINETTE</text>
<rect x="202" y="154.500" width="57.500" height="9.500" fill="#fff"/><rect x="202" y="165.500" width="94.500" height="9.500" fill="#fff"/>
<g fill="#222" font-size="7.700px">
<text x="203.300" y="161.900" textLength="54.700" lengthAdjust="spacingAndGlyphs">1/2 WALL WITH</text>
<text x="203.300" y="172.800" textLength="92" lengthAdjust="spacingAndGlyphs">CULTURED MARBLE SILL</text>
<text x="382" y="260.300" textLength="66" lengthAdjust="spacingAndGlyphs">BALCONY ABOVE</text>
<text x="275.900" y="338.900" textLength="30.500" lengthAdjust="spacingAndGlyphs">PANTRY</text>
<text x="508" y="320" textLength="30.300" lengthAdjust="spacingAndGlyphs">CLOSET</text>
<text x="547.200" y="352.500" textLength="34" lengthAdjust="spacingAndGlyphs">SHOWER</text>
<text x="516.200" y="367.200" textLength="19.700" lengthAdjust="spacingAndGlyphs">SEAT</text>
<text x="482" y="376.600" textLength="31.200" lengthAdjust="spacingAndGlyphs">RETURN</text>
<text x="484.500" y="383">AIR</text>
<text x="341.800" y="315" fill="#555" font-size="7.200px">GF</text>
</g>
<g fill="#111" font-size="7.700px" font-weight="bold">
<text x="132.700" y="252" textLength="15.500" lengthAdjust="spacingAndGlyphs">D/W</text>
<text x="101" y="364.800" textLength="17" lengthAdjust="spacingAndGlyphs">REF.</text>
<text x="469.100" y="195.200" textLength="14.500" lengthAdjust="spacingAndGlyphs">FAN</text>
<text x="520.900" y="176.900" textLength="14.800" lengthAdjust="spacingAndGlyphs">LITE</text>
<text x="574.400" y="127.700" textLength="9.300" lengthAdjust="spacingAndGlyphs">FP</text>
<text x="342" y="338.800" textLength="14.300" lengthAdjust="spacingAndGlyphs">FAN</text>
<text x="31" y="209.500" font-size="6px" font-weight="normal">3M</text>
</g>
<!-- dimension texts -->
<g fill="#111" font-size="7.800px" font-weight="bold" text-anchor="middle">
<text x="64.500" y="105">3'-4"</text>
<text x="136.400" y="201.300">6'-2"</text>
<text x="66.700" y="297.200">3'-0"</text>
<text x="319" y="229.500">3'-6"</text>
<text x="289" y="290.200">2'-6"</text>
<text x="325.200" y="290.600">2'-7"</text>
<text x="357.500" y="290.600">2'-0"</text>
<text x="378.800" y="290.600">1'-0"</text>
<text x="505" y="276">6'-5"</text>
<text x="579.200" y="276">4'-0"</text>
<text x="192" y="287.800" transform="rotate(29 192 285.400)">3'-0"</text>
<text transform="translate(319.200 112.400) rotate(-90)">4'-4"</text>
<text transform="translate(400.600 123.300) rotate(-90)">18'-0"</text>
<text transform="translate(273 234) rotate(-90)">3'-2"</text>
<text transform="translate(400.400 276.900) rotate(-90)">3'-5"</text>
<text transform="translate(400.400 311.300) rotate(-90)">1'-0"</text>
<text transform="translate(400.400 345.700) rotate(-90)">4'-0"</text>
<text transform="translate(554.500 325.600) rotate(-90)">2'-4"</text>
</g>
</svg>

</body>
</html>
